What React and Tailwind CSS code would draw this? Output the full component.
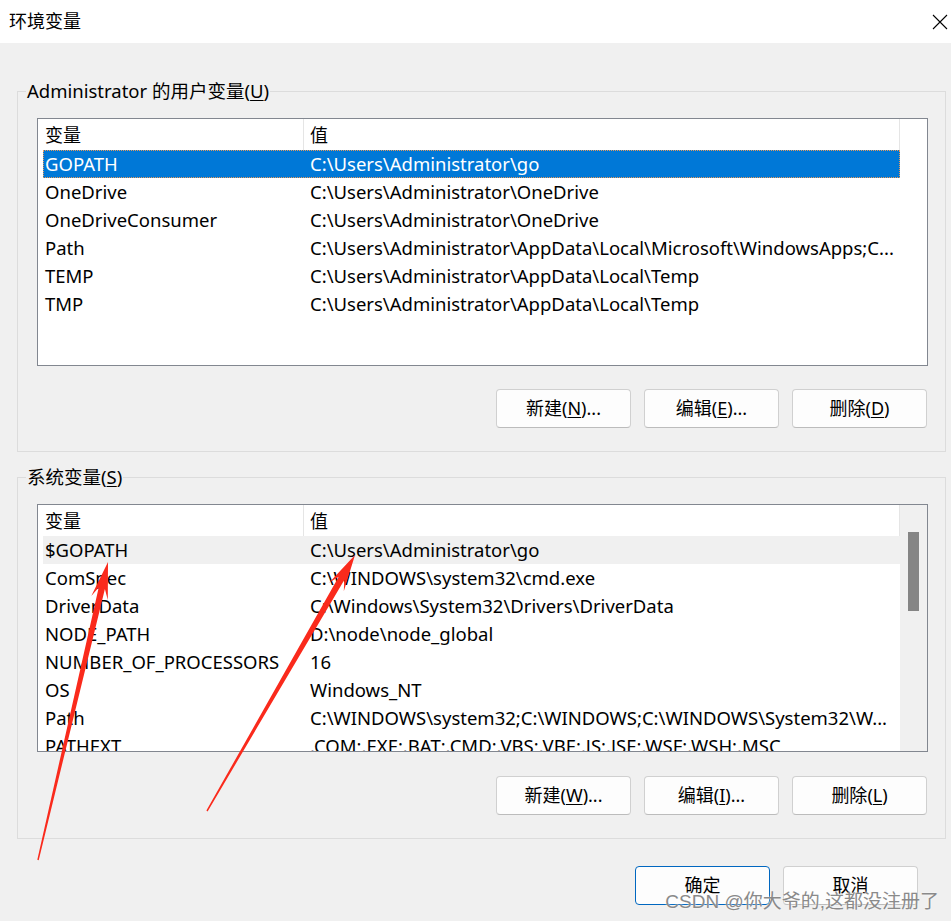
import React from "react";

const userVars = [
  ["GOPATH", "C:\\Users\\Administrator\\go"],
  ["OneDrive", "C:\\Users\\Administrator\\OneDrive"],
  ["OneDriveConsumer", "C:\\Users\\Administrator\\OneDrive"],
  ["Path", "C:\\Users\\Administrator\\AppData\\Local\\Microsoft\\WindowsApps;C..."],
  ["TEMP", "C:\\Users\\Administrator\\AppData\\Local\\Temp"],
  ["TMP", "C:\\Users\\Administrator\\AppData\\Local\\Temp"],
];

const sysVars = [
  ["$GOPATH", "C:\\Users\\Administrator\\go"],
  ["ComSpec", "C:\\WINDOWS\\system32\\cmd.exe"],
  ["DriverData", "C:\\Windows\\System32\\Drivers\\DriverData"],
  ["NODE_PATH", "D:\\node\\node_global"],
  ["NUMBER_OF_PROCESSORS", "16"],
  ["OS", "Windows_NT"],
  ["Path", "C:\\WINDOWS\\system32;C:\\WINDOWS;C:\\WINDOWS\\System32\\W..."],
  ["PATHEXT", ".COM;.EXE;.BAT;.CMD;.VBS;.VBE;.JS;.JSE;.WSF;.WSH;.MSC"],
];

function Btn({ label, hot, rest, primary }) {
  return (
    <button
      className={
        "w-[135px] h-[39px] rounded-[4px] bg-[#fdfdfd] text-[18px] text-black flex items-center justify-center " +
        (primary ? "border border-[#0067c0]" : "border border-[#d0d0d0] border-b-[#bcbcbc]")
      }
    >
      {label}
      {hot ? (
        <>
          (<span className="underline underline-offset-2">{hot}</span>){rest}
        </>
      ) : null}
    </button>
  );
}

function Header() {
  return (
    <div className="shrink-0 flex h-[31px] items-center text-[18px] bg-white">
      <div className="w-[266px] h-full pl-[7px] pt-[2px] flex items-center border-r border-[#e5e5e5]">变量</div>
      <div className="flex-1 h-full pl-[6px] pt-[2px] flex items-center border-r border-[#e5e5e5]">值</div>
    </div>
  );
}

function Row({ name, value, mode }) {
  const cls =
    mode === "sel"
      ? "bg-[#0078d7] text-white outline-1 outline-dotted outline-[#e89a5a] -outline-offset-1"
      : mode === "hover"
      ? "bg-[#f0f0f0] text-black"
      : "text-black";
  return (
    <div className={"shrink-0 ml-[5px] flex h-[28px] items-center text-[18.5px] whitespace-nowrap " + cls}>
      <div className="w-[266px] shrink-0 pl-[2px] overflow-hidden">{name}</div>
      <div className="flex-1 pl-[1px] overflow-hidden">{value}</div>
    </div>
  );
}

function List({ rows, scroll, first }) {
  return (
    <div className="h-[248px] border border-[#828790] bg-white flex overflow-hidden">
      <div className="w-[862px] flex flex-col">
        <Header />
        {rows.map(([n, v], i) => (
          <Row key={n} name={n} value={v} mode={i === 0 ? first : ""} />
        ))}
      </div>
      {scroll ? (
        <div className="w-[27px] bg-[#f0f0f0] pt-[27px] flex justify-center">
          <div className="w-[11px] h-[79px] bg-[#858585]" />
        </div>
      ) : (
        <div className="w-[27px] bg-white" />
      )}
    </div>
  );
}

function Group({ title, hot, children }) {
  return (
    <div className="border border-[#dcdcdc] pl-[19px] pr-[17px]">
      <div className="-mt-[14px] -ml-[11px] w-fit bg-[#f0f0f0] px-[1px] leading-[26px] text-[18.5px]">
        {title}(<span className="underline underline-offset-2">{hot}</span>)
      </div>
      {children}
    </div>
  );
}

function arrowPoints(tx, ty, hx, hy) {
  const dx = hx - tx;
  const dy = hy - ty;
  const L = Math.hypot(dx, dy);
  const ux = dx / L;
  const uy = dy / L;
  const nx = -uy;
  const ny = ux;
  const p = (d, w) => `${(hx - ux * d + nx * w).toFixed(1)},${(hy - uy * d + ny * w).toFixed(1)}`;
  return [p(L, 0.7), p(27, 3.2), p(37, 8.5), `${hx},${hy}`, p(37, -8.5), p(27, -3.2), p(L, -0.7)].join(" ");
}

export default function App() {
  return (
    <div className="relative w-[951px] h-[921px] overflow-hidden bg-[#f0f0f0] text-black font-['Noto_Sans','Noto_Sans_CJK_SC',sans-serif]">
      <div className="h-[43px] bg-white flex items-center justify-between pl-[9px] pr-[2px]">
        <span className="text-[18px]">环境变量</span>
        <svg width="16" height="16" viewBox="0 0 16 16" className="mr-[1px]">
          <path d="M1 1 L15 15 M15 1 L1 15" stroke="#000" strokeWidth="1.1" fill="none" />
        </svg>
      </div>

      <div className="pl-[17px] pr-[5px]">
        <div className="mt-[48px]">
          <Group title="Administrator 的用户变量" hot="U">
            <div className="mt-[14px]">
              <List rows={userVars} first="sel" />
            </div>
            <div className="mt-[23px] mb-[23px] flex justify-end gap-[13px] pr-[1px]">
              <Btn label="新建" hot="N" rest="..." />
              <Btn label="编辑" hot="E" rest="..." />
              <Btn label="删除" hot="D" rest="" />
            </div>
          </Group>
        </div>

        <div className="mt-[25px]">
          <Group title="系统变量" hot="S">
            <div className="mt-[14px]">
              <List rows={sysVars} scroll first="hover" />
            </div>
            <div className="mt-[24px] mb-[23px] flex justify-end gap-[13px] pr-[1px]">
              <Btn label="新建" hot="W" rest="..." />
              <Btn label="编辑" hot="I" rest="..." />
              <Btn label="删除" hot="L" rest="" />
            </div>
          </Group>
        </div>
      </div>

      <div className="mt-[27px] flex justify-end gap-[13px] pr-[33px]">
        <Btn label="确定" primary />
        <Btn label="取消" />
      </div>

      <svg className="absolute inset-0 pointer-events-none" width="951" height="921" viewBox="0 0 951 921">
        <polygon points={arrowPoints(38, 860, 108, 562)} fill="#fa2a1c" />
        <polygon points={arrowPoints(207, 811, 355, 555)} fill="#fa2a1c" />
      </svg>

      <div className="absolute right-[12px] top-[889px] text-[19px] leading-[26px] text-[#8a8a8a] whitespace-nowrap [text-shadow:0_0_2px_#ffffff] font-['Liberation_Sans','Noto_Sans_CJK_SC',sans-serif]">
        CSDN @你大爷的,这都没注册了
      </div>
    </div>
  );
}
